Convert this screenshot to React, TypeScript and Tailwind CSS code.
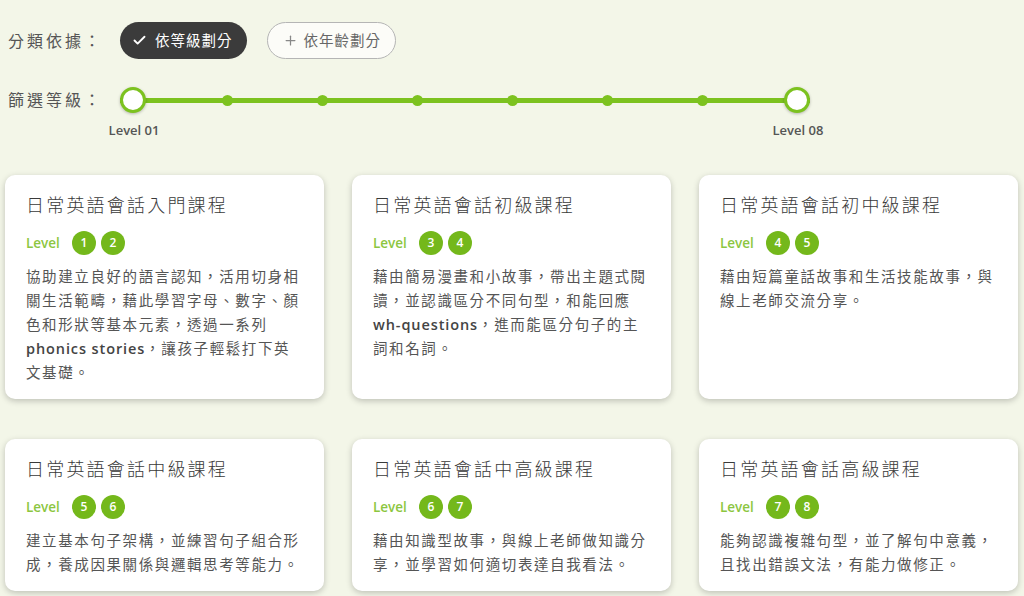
import { Check, Plus } from 'lucide-react';

const courses = [
  {
    title: '日常英語會話入門課程',
    levels: [1, 2],
    body: (
      <>
        協助建立良好的語言認知，活用切身相關生活範疇，藉此學習字母、數字、顏色和形狀等基本元素，透過一系列
        <b className="font-semibold text-[#444] tracking-[0.9px]">phonics stories</b>，讓孩子輕鬆打下英文基礎。
      </>
    ),
  },
  {
    title: '日常英語會話初級課程',
    levels: [3, 4],
    body: (
      <>
        藉由簡易漫畫和小故事，帶出主題式閱讀，並認識區分不同句型，和能回應
        <b className="font-semibold text-[#444] tracking-[0.9px]">wh-questions</b>，進而能區分句子的主詞和名詞。
      </>
    ),
  },
  {
    title: '日常英語會話初中級課程',
    levels: [4, 5],
    body: <>藉由短篇童話故事和生活技能故事，與線上老師交流分享。</>,
  },
  {
    title: '日常英語會話中級課程',
    levels: [5, 6],
    body: <>建立基本句子架構，並練習句子組合形成，養成因果關係與邏輯思考等能力。</>,
  },
  {
    title: '日常英語會話中高級課程',
    levels: [6, 7],
    body: <>藉由知識型故事，與線上老師做知識分享，並學習如何適切表達自我看法。</>,
  },
  {
    title: '日常英語會話高級課程',
    levels: [7, 8],
    body: <>能夠認識複雜句型，並了解句中意義，且找出錯誤文法，有能力做修正。</>,
  },
];

const font = "font-['Open_Sans','Noto_Sans_CJK_TC',sans-serif]";

function Knob({ big, label }: { big?: boolean; label?: string }) {
  return (
    <div className="w-[26px] flex flex-col items-center">
      <div className="h-[26px] flex items-center justify-center">
        {big ? (
          <div className="w-[26px] h-[26px] rounded-full bg-white border-[3px] border-[#7cc21f] shadow-[0_1px_3px_rgba(0,0,0,0.25)]" />
        ) : (
          <div className="w-[11px] h-[11px] rounded-full bg-[#7cc21f]" />
        )}
      </div>
      <div className="h-[18px] mt-[8px] flex justify-center">
        {label && (
          <span className="whitespace-nowrap text-[13px] leading-[18px] font-semibold text-[#555] pl-[2px]">
            {label}
          </span>
        )}
      </div>
    </div>
  );
}

function CourseCard({ c }: { c: (typeof courses)[number] }) {
  return (
    <div className="bg-white rounded-[10px] shadow-[0_2px_6px_rgba(0,0,0,0.22)] pl-[21px] pr-[22px] pt-[16px] pb-[14px]">
      <h3 className="text-[18px] leading-[28px] tracking-[2.2px] text-[#3a3a3a] font-light">{c.title}</h3>
      <div className="flex items-center mt-[12px] h-[24px]">
        <span className="text-[13.5px] font-semibold text-[#8cc63f] mr-[12px]">Level</span>
        <div className="flex gap-[5px]">
          {c.levels.map((l) => (
            <span
              key={l}
              className="w-[24px] h-[24px] rounded-full bg-[#74b81b] text-white text-[12px] font-semibold flex items-center justify-center"
            >
              {l}
            </span>
          ))}
        </div>
      </div>
      <p className="mt-[10px] text-[14.5px] leading-[24px] tracking-[1.6px] text-[#555]">{c.body}</p>
    </div>
  );
}

export default function App() {
  return (
    <div className={`${font} w-[1024px] h-[596px] overflow-hidden bg-[#f3f6e8] pt-[22px]`}>
      <div className="flex items-center pl-[8px] h-[37px]">
        <span className="w-[112px] text-[16px] tracking-[3px] text-[#555]">分類依據：</span>
        <button className="h-[37px] rounded-full bg-[#3b3b3b] text-white flex items-center pl-[12px] pr-[14px] gap-[8px]">
          <Check className="w-[15px] h-[15px]" strokeWidth={3} />
          <span className="text-[14.5px] tracking-[1px]">依等級劃分</span>
        </button>
        <button className="ml-[20px] h-[37px] rounded-full bg-white/70 border-[1.5px] border-[#b5b5b5] text-[#666] flex items-center pl-[15px] pr-[14px] gap-[6px]">
          <Plus className="w-[15px] h-[15px] text-[#888]" strokeWidth={2} />
          <span className="text-[14.5px] tracking-[1px]">依年齡劃分</span>
        </button>
      </div>

      <div className="flex items-start pl-[8px] mt-[28px]">
        <span className="w-[112px] h-[26px] leading-[26px] text-[16px] tracking-[3px] text-[#555]">篩選等級：</span>
        <div className="w-[690px]">
          <div className="flex justify-between bg-[linear-gradient(#7cc21f,#7cc21f)] bg-no-repeat bg-[length:100%_5px] bg-[position:0_10.5px]">
            <Knob big label="Level 01" />
            <Knob />
            <Knob />
            <Knob />
            <Knob />
            <Knob />
            <Knob />
            <Knob big label="Level 08" />
          </div>
        </div>
      </div>

      <div className="grid grid-cols-[319px_319px_319px] gap-x-[28px] gap-y-[40px] pl-[5px] mt-[36px]">
        {courses.map((c) => (
          <CourseCard key={c.title} c={c} />
        ))}
      </div>
    </div>
  );
}
